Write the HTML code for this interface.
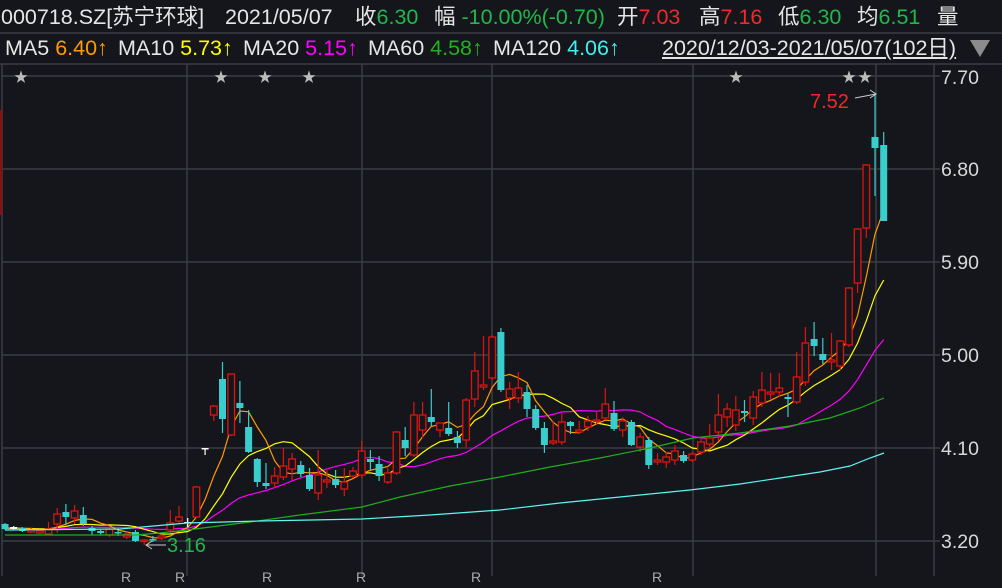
<!DOCTYPE html>
<html><head><meta charset="utf-8">
<style>
html,body{margin:0;padding:0;background:#14161b;}
body{width:1002px;height:576px;overflow:hidden;position:relative;font-family:"Liberation Sans","Noto Sans CJK SC",sans-serif;}
.t{position:absolute;font-size:21.5px;white-space:nowrap;line-height:22px;color:#e6e6e6;}
.w{color:#e6e6e6}.g{color:#1fb84a}.r{color:#ee2a2a}.o{color:#ff9a00}.y{color:#ffff00}.m{color:#ff00ff}.gg{color:#23b020}.c{color:#3ff0f0}
.ax{font-size:19.5px;color:#d8d8d8}
</style></head><body>
<svg id="s" width="1002" height="576" style="position:absolute;left:0;top:0">
<g stroke="#3a3d44" stroke-width="1.5" fill="none">
<line x1="0" y1="33" x2="1002" y2="33"/>
<line x1="0" y1="64" x2="1002" y2="64"/>
<line x1="2" y1="64" x2="2" y2="576"/>
<line x1="934" y1="64" x2="934" y2="576"/>
<line x1="187" y1="64" x2="187" y2="576"/>
<line x1="362" y1="64" x2="362" y2="576"/>
<line x1="492" y1="64" x2="492" y2="576"/>
<line x1="693" y1="64" x2="693" y2="576"/>
<line x1="876" y1="64" x2="876" y2="576"/>
<line x1="2" y1="76" x2="940" y2="76"/>
<line x1="2" y1="169" x2="940" y2="169"/>
<line x1="2" y1="262" x2="940" y2="262"/>
<line x1="2" y1="355" x2="940" y2="355"/>
<line x1="2" y1="448" x2="940" y2="448"/>
<line x1="2" y1="541" x2="940" y2="541"/>
</g>
<rect x="0" y="110" width="2" height="105" fill="#8a1010"/>
<g id="ma"></g>
<g id="cd"></g>
<polyline fill="none" stroke="#1fae1f" stroke-width="1.2" points="5,535 135,535 160,533 187,530 250,522 300,515 362,507 400,497 450,486 500,477 550,467 600,458 650,448 693,438 740,433 790,426 830,418 860,408 884,398"/>
<polyline fill="none" stroke="#5ff5f5" stroke-width="1.2" points="5,530 120,529 187,523 260,521 362,519 430,515 500,510 560,503 620,497 690,490 740,484 780,478 820,472 850,466 870,458 884,453"/>
<line x1="855" y1="98" x2="876" y2="94" stroke="#ccc" stroke-width="1"/>
<polyline points="870,90 876,94 870,98" fill="none" stroke="#ccc" stroke-width="1"/>
<line x1="146" y1="545" x2="166" y2="545" stroke="#ccc" stroke-width="1"/>
<polyline points="152,541 146,545 152,549" fill="none" stroke="#ccc" stroke-width="1"/>
</svg>

<div class="t" style="left:1px;top:6px">000718.SZ[苏宁环球]</div>
<div class="t" style="left:225px;top:6px">2021/05/07</div>
<div class="t" style="left:355px;top:6px">收<span class="g">6.30</span></div>
<div class="t" style="left:434px;top:6px">幅<span class="g"> -10.00%(-0.70)</span></div>
<div class="t" style="left:617px;top:6px">开<span class="r">7.03</span></div>
<div class="t" style="left:699px;top:6px">高<span class="r">7.16</span></div>
<div class="t" style="left:778px;top:6px">低<span class="g">6.30</span></div>
<div class="t" style="left:857px;top:6px">均<span class="g">6.51</span></div>
<div class="t" style="left:937px;top:6px">量</div>

<div class="t" style="left:5px;top:37px">MA5 <span class="o">6.40↑</span></div>
<div class="t" style="left:118px;top:37px">MA10 <span class="y">5.73↑</span></div>
<div class="t" style="left:243px;top:37px">MA20 <span class="m">5.15↑</span></div>
<div class="t" style="left:368px;top:37px">MA60 <span class="gg">4.58↑</span></div>
<div class="t" style="left:493px;top:37px">MA120 <span class="c">4.06↑</span></div>
<div class="t" style="left:662px;top:37px;text-decoration:underline">2020/12/03-2021/05/07(102日)</div>
<div style="position:absolute;left:970px;top:40px;width:0;height:0;border-left:10px solid transparent;border-right:10px solid transparent;border-top:17px solid #8c8c8c"></div>

<div class="t ax" style="left:941px;top:67px">7.70</div>
<div class="t ax" style="left:941px;top:159px">6.80</div>
<div class="t ax" style="left:941px;top:252px">5.90</div>
<div class="t ax" style="left:941px;top:345px">5.00</div>
<div class="t ax" style="left:941px;top:438px">4.10</div>
<div class="t ax" style="left:941px;top:531px">3.20</div>

<div class="t" style="left:810px;top:91px;font-size:20px;color:#ee2a2a">7.52</div>
<div class="t" style="left:167px;top:535px;font-size:20px;color:#1fb84a">3.16</div>

<div class="t" style="left:14px;top:66px;font-size:14px;color:#bbb">★</div>
<div class="t" style="left:214px;top:66px;font-size:14px;color:#bbb">★</div>
<div class="t" style="left:258px;top:66px;font-size:14px;color:#bbb">★</div>
<div class="t" style="left:302px;top:66px;font-size:14px;color:#bbb">★</div>
<div class="t" style="left:729px;top:66px;font-size:14px;color:#bbb">★</div>
<div class="t" style="left:842px;top:66px;font-size:14px;color:#bbb">★</div>
<div class="t" style="left:858px;top:66px;font-size:14px;color:#bbb">★</div>

<div class="t" style="left:121px;top:566px;font-size:14px;color:#aaa">R</div>
<div class="t" style="left:175px;top:566px;font-size:14px;color:#aaa">R</div>
<div class="t" style="left:262px;top:566px;font-size:14px;color:#aaa">R</div>
<div class="t" style="left:356px;top:566px;font-size:14px;color:#aaa">R</div>
<div class="t" style="left:471px;top:566px;font-size:14px;color:#aaa">R</div>
<div class="t" style="left:652px;top:566px;font-size:14px;color:#aaa">R</div>

<script>
var D=[
[524,529,523,530,'c'],[527,529,526,530,'w'],[528,531,527,532,'c'],[530,532,528,533,'r'],[531,533,530,534,'r'],
[529,534,522,535,'r'],[514,524,508,533,'r'],[512,517,504,525,'c'],[511,518,505,524,'r'],[515,524,507,526,'c'],
[528,531,526,535,'c'],[531,533,530,535,'c'],[529,535,528,537,'r'],[532,533,528,536,'c'],[534,537,532,539,'r'],
[532,541,530,542,'c'],[540,541,539,545,'r'],[539,540,536,542,'c'],[536,538,534,540,'r'],[523,530,510,533,'r'],
[517,521,506,523,'r'],[522,523,518,527,'w'],[487,517,486,518,'r'],[448,449,448,455,'w'],[406,415,405,421,'r'],
[379,419,362,433,'c'],[374,435,374,436,'r'],[403,408,381,423,'c'],[427,452,410,453,'c'],[459,482,458,487,'c'],
[483,486,463,489,'c'],[476,483,467,488,'r'],[466,477,448,480,'r'],[459,469,453,480,'r'],[465,474,461,477,'c'],
[475,489,468,491,'c'],[475,493,450,500,'r'],[480,482,470,488,'r'],[479,485,470,488,'c'],[482,489,468,496,'r'],
[471,476,467,478,'r'],[451,475,441,478,'r'],[459,462,450,470,'c'],[464,476,456,481,'c'],[473,482,468,484,'r'],
[432,473,431,475,'r'],[440,448,427,456,'c'],[415,455,402,457,'r'],[415,430,402,438,'r'],[417,422,389,426,'c'],
[423,430,423,437,'r'],[428,434,402,436,'c'],[437,443,431,448,'c'],[400,440,398,447,'r'],[371,399,352,407,'r'],
[385,387,336,390,'r'],[337,378,335,380,'r'],[332,390,328,392,'c'],[389,398,382,409,'r'],[388,398,372,403,'r'],
[392,409,385,417,'c'],[409,428,405,430,'c'],[428,445,422,453,'c'],[441,443,421,445,'r'],[422,442,413,445,'r'],
[422,426,421,434,'c'],[430,432,421,434,'r'],[421,427,416,431,'r'],[420,421,412,425,'r'],[404,418,388,420,'r'],
[413,429,401,431,'c'],[421,430,417,437,'r'],[422,445,420,446,'c'],[437,447,433,452,'r'],[440,465,437,469,'c'],
[460,462,453,465,'r'],[457,462,452,468,'r'],[451,460,445,465,'r'],[455,461,451,463,'c'],[454,460,452,462,'r'],
[442,452,437,455,'r'],[438,444,424,447,'r'],[415,432,394,441,'r'],[409,417,403,427,'r'],[410,425,396,431,'r'],
[411,413,400,422,'c'],[397,418,391,425,'r'],[390,403,372,407,'r'],[392,394,373,400,'r'],[388,392,373,397,'r'],
[397,399,393,417,'c'],[377,402,352,404,'r'],[343,382,327,386,'r'],[339,346,322,356,'c'],[354,360,338,364,'c'],
[360,362,333,370,'r'],[341,366,340,370,'r'],[288,345,287,347,'r'],[229,283,228,293,'r'],[165,228,164,238,'r'],
[137,148,93,196,'c'],[145,221,132,221,'c']
];
var ns="http://www.w3.org/2000/svg",cd=document.getElementById('cd'),ma=document.getElementById('ma');
function el(t,a,p){var e=document.createElementNS(ns,t);for(var k in a)e.setAttribute(k,a[k]);p.appendChild(e);return e;}
var closes=[];
D.forEach(function(d,i){
 var x=5+i*8.7,col=d[4]=='r'?'#e0140f':(d[4]=='c'?'#3acdcd':'#ffffff');
 closes.push(d[4]=='c'?d[1]:d[0]);
 if(d[4]=='r'){
  el('line',{x1:x,y1:d[2],x2:x,y2:d[0],stroke:col,'stroke-width':1.2},cd);
  el('line',{x1:x,y1:d[1],x2:x,y2:d[3],stroke:col,'stroke-width':1.2},cd);
  var h=Math.max(d[1]-d[0],1.5);
  el('rect',{x:x-3.3,y:d[0],width:6.6,height:h,fill:'#14161b',stroke:col,'stroke-width':1.3},cd);
 }else{
  el('line',{x1:x,y1:d[2],x2:x,y2:d[3],stroke:col,'stroke-width':1.2},cd);
  var h2=Math.max(d[1]-d[0],1.5);
  el('rect',{x:x-3.5,y:d[0],width:7,height:h2,fill:col},cd);
 }
});
function mal(n,color,pad){
 var arr=[],pts=[];for(var k=0;k<n;k++)arr.push(pad);arr=arr.concat(closes);
 for(var i=0;i<closes.length;i++){var s=0;for(var j=0;j<n;j++)s+=arr[i+n-j];pts.push((5+i*8.7).toFixed(1)+','+(s/n).toFixed(1));}
 el('polyline',{points:pts.join(' '),fill:'none',stroke:color,'stroke-width':1.2},ma);
}
mal(20,'#ff00ff',530);mal(10,'#ffff00',528);mal(5,'#ff9a00',528);
</script>
</body></html>
